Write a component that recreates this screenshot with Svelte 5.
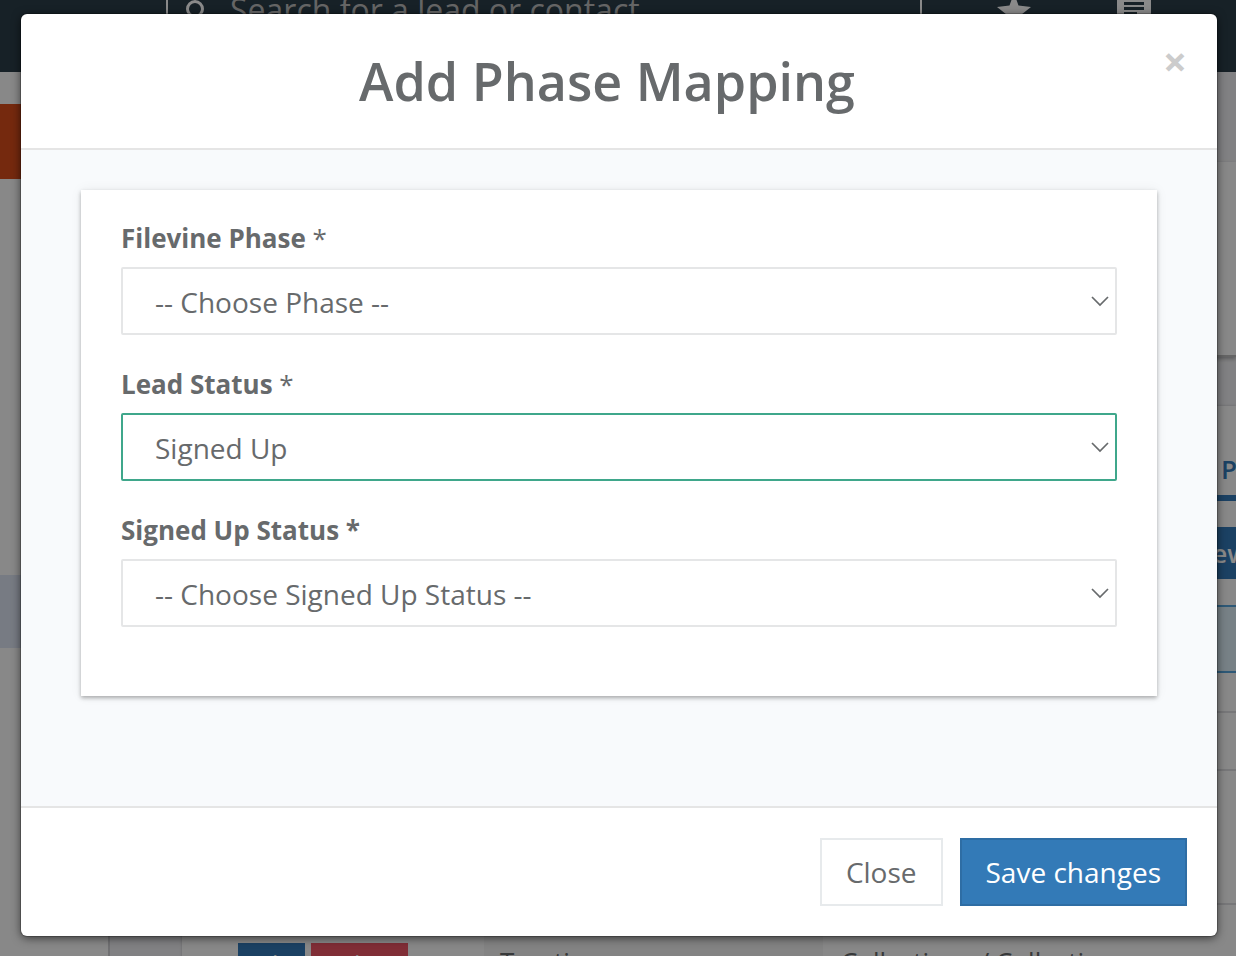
<script>
  let phase = $state('');
  let lead = $state('signed');
  let signed = $state('');
</script>

{#snippet chevron()}
  <svg class="chevron" viewBox="0 0 20 12" aria-hidden="true">
    <path d="M2 2 L10 10 L18 2" fill="none" stroke="#676a6c" stroke-width="1.700" />
  </svg>
{/snippet}

<div class="app">
  <div class="page">
    <header class="topbar">
      <div class="search">
        <svg class="lens" viewBox="0 0 24 34" aria-hidden="true">
          <circle cx="12" cy="16" r="7.5" fill="none" stroke="#fff" stroke-width="3" />
          <path d="M7.500 22 L2 32" stroke="#fff" stroke-width="3" />
        </svg>
        <span>Search for a lead or contact</span>
      </div>
      <svg class="star" viewBox="0 0 34 34" aria-hidden="true">
        <path d="M17 0 L21.5 12.500 L34 14 L24.500 21.500 L28 34 L17 27 L6 34 L9.500 21.500 L0 14 L12.500 12.500 Z" fill="#fff" />
      </svg>
      <svg class="note" viewBox="0 0 34 34" aria-hidden="true">
        <path d="M0 0H34V34H0Z" fill="#fff" />
        <path d="M7 10.500H27M7 15.500H27M7 20.500H20" stroke="#2b3d49" stroke-width="3" />
      </svg>
    </header>
    <div class="columns">
      <nav class="sidebar">
        <div class="brand"></div>
        <div class="current"></div>
      </nav>
      <main class="content">
        <div class="heading"></div>
        <div class="summary"></div>
        <section class="panel">
          <div class="tabs"><span>P</span></div>
          <div class="tools"><button class="new" type="button">New</button></div>
          <div class="notice"></div>
          <div class="row short"></div>
          <div class="row medium"></div>
          <div class="row tall"></div>
          <div class="record">
            <div class="actions">
              <button class="edit" type="button">Edit</button>
              <button class="delete" type="button">Delete</button>
            </div>
            <div class="cell shaded">Treating</div>
            <div class="cell">Collections / Collections</div>
          </div>
        </section>
      </main>
    </div>
  </div>

  <div class="backdrop">
    <div class="modal" role="dialog" aria-modal="true" aria-labelledby="modal-title">
      <div class="modal-header">
        <h1 id="modal-title">Add Phase Mapping</h1>
        <button class="dismiss" type="button" aria-label="Dismiss">×</button>
      </div>
      <form class="modal-body" id="mapping">
        <div class="card">
          <div class="field">
            <label for="phase"><b>Filevine Phase</b> *</label>
            <div class="select">
              <select id="phase" bind:value={phase}>
                <option value="">-- Choose Phase --</option>
              </select>
              {@render chevron()}
            </div>
          </div>
          <div class="field">
            <label for="lead"><b>Lead Status</b> *</label>
            <div class="select">
              <select id="lead" class="active" bind:value={lead}>
                <option value="signed">Signed Up</option>
              </select>
              {@render chevron()}
            </div>
          </div>
          <div class="field">
            <label for="signed"><b>Signed Up Status *</b></label>
            <div class="select">
              <select id="signed" bind:value={signed}>
                <option value="">-- Choose Signed Up Status --</option>
              </select>
              {@render chevron()}
            </div>
          </div>
        </div>
      </form>
      <div class="modal-footer">
        <button class="btn" type="button">Close</button>
        <button class="btn primary" type="button">Save changes</button>
      </div>
    </div>
  </div>
</div>

<style>
  :global(body) {
    margin: 0;
  }
  .app,
  .app * {
    box-sizing: border-box;
  }
  .app {
    position: relative;
    min-height: 100vh;
    overflow: hidden;
    font-family: "Open Sans", sans-serif;
    font-size: 28px;
    line-height: 40px;
    color: #676a6c;
  }
  button,
  select {
    font: inherit;
    color: inherit;
    margin: 0;
    border-radius: 0;
  }

  /* page behind the dialog, scrolled down a little */
  .page {
    position: absolute;
    inset: -52px 0 0;
    overflow: hidden;
    display: flex;
    flex-direction: column;
    background: #fcfcfc;
  }
  .topbar {
    flex: none;
    height: 124px;
    display: flex;
    align-items: center;
    padding: 0 85px 0 166px;
    background: #2b3d49;
  }
  .search {
    flex: 1;
    display: flex;
    align-items: center;
    gap: 23px;
    height: 80px;
    padding-left: 15px;
    border: solid #fff;
    border-width: 0 2px;
    color: #bbb;
    font-size: 32px;
    white-space: nowrap;
  }
  .lens {
    width: 24px;
    height: 34px;
  }
  .star {
    width: 34px;
    height: 34px;
    margin: 0 86px 0 75px;
  }
  .note {
    width: 34px;
    height: 34px;
  }
  .columns {
    flex: 1;
    min-height: 0;
    display: flex;
  }
  .sidebar {
    flex: none;
    width: 110px;
    padding-top: 32px;
    border-right: 2px solid #d0d0d2;
  }
  .brand {
    height: 75px;
    background: #d84c1b;
  }
  .current {
    height: 73px;
    margin-top: 396px;
    background: #dce4f2;
  }
  .content {
    flex: 1;
    min-width: 0;
    padding-left: 72px;
    background: #efeff2;
  }
  .heading {
    height: 90px;
  }
  .summary {
    height: 195px;
    margin-bottom: 49px;
    background: #fcfcfc;
    border-bottom: 2px solid #bbb;
    box-shadow: 0 2px 4px rgba(0, 0, 0, 0.3);
  }
  .panel {
    height: 600px;
    background: #fcfcfc;
    box-shadow: 0 0 3px rgba(0, 0, 0, 0.2);
  }
  .tabs {
    height: 95px;
    padding-top: 43px;
    display: flex;
    justify-content: flex-end;
    border-bottom: 6px solid #3379b7;
    color: #3379b7;
    font-size: 26px;
    font-weight: 600;
  }
  .tabs span {
    width: 15px;
  }
  .tools {
    display: flex;
    justify-content: flex-end;
    padding: 26px 0;
  }
  .new {
    width: 92px;
    height: 52px;
    padding: 0 0 0 48px;
    border: 0;
    background: #3379b7;
    color: #fff;
    font-size: 26px;
    font-weight: 600;
    text-align: left;
  }
  .notice {
    height: 68px;
    border: solid #56a5dc;
    border-width: 2px 0;
    background: #dceef8;
  }
  .row {
    border-bottom: 2px solid #dcdcdf;
  }
  .short {
    height: 40px;
  }
  .medium {
    height: 58px;
  }
  .tall {
    height: 134px;
  }
  .record {
    display: flex;
    height: 100px;
    font-size: 26px;
    color: #676a6c;
  }
  .actions {
    flex: 0 0 302px;
    display: flex;
    gap: 6px;
    padding: 38px 0 0 56px;
  }
  .actions button {
    height: 42px;
    padding: 0;
    border: 0;
    color: #fff;
    font-size: 24px;
  }
  .actions .edit {
    width: 67px;
    background: #3379b7;
  }
  .actions .delete {
    width: 97px;
    background: #ed5565;
  }
  .cell {
    padding: 36px 18px 0;
    white-space: nowrap;
  }
  .shaded {
    flex: 0 0 339px;
    padding-left: 16px;
    background: #f2f2f2;
  }

  /* dialog */
  .backdrop {
    position: relative;
    min-height: 100vh;
    padding: 14px 19px 20px 21px;
    background: rgba(0, 0, 0, 0.46);
  }
  .modal {
    background: #fff;
    border-radius: 6px;
    box-shadow: 0 0 0 1px rgba(0, 0, 0, 0.2), 0 2px 10px rgba(0, 0, 0, 0.6);
  }
  .modal-header {
    display: flex;
    align-items: flex-start;
    padding: 30px;
    border-bottom: 2px solid #e5e5e5;
  }
  h1 {
    flex: 1;
    margin: 0;
    font-size: 52px;
    line-height: 74px;
    font-weight: 600;
    text-align: center;
  }
  .dismiss {
    padding: 0;
    border: 0;
    background: none;
    color: #ccc;
    font-size: 42px;
    line-height: 34px;
    font-weight: 700;
  }
  .modal-body {
    padding: 40px 60px 110px;
    background: #f8fafc;
  }
  .card {
    display: flex;
    flex-direction: column;
    gap: 31px;
    padding: 30px 40px 69px;
    background: #fff;
    box-shadow: 0 2px 4px rgba(0, 0, 0, 0.3), 0 0 12px rgba(0, 0, 0, 0.06);
  }
  label {
    display: block;
    margin-bottom: 11px;
    font-size: 26px;
    line-height: 36px;
  }
  .select {
    display: grid;
    align-items: center;
  }
  .select > :global(*) {
    grid-area: 1 / 1;
  }
  select {
    width: 100%;
    height: 68px;
    padding: 2px 32px 0;
    appearance: none;
    background: #fff;
    border: 2px solid #e5e6e7;
    border-radius: 2px;
  }
  select.active {
    border-color: #3fa78b;
  }
  .chevron {
    justify-self: end;
    width: 20px;
    height: 12px;
    margin-right: 7px;
    pointer-events: none;
  }
  .modal-footer {
    display: flex;
    justify-content: flex-end;
    gap: 17px;
    padding: 30px;
    border-top: 2px solid #e5e5e5;
  }
  .btn {
    height: 68px;
    padding: 0 24px;
    background: #fff;
    border: 2px solid #e7eaec;
  }
  .primary {
    background: #337ab7;
    border-color: #2e6da4;
    color: #fff;
  }
</style>
